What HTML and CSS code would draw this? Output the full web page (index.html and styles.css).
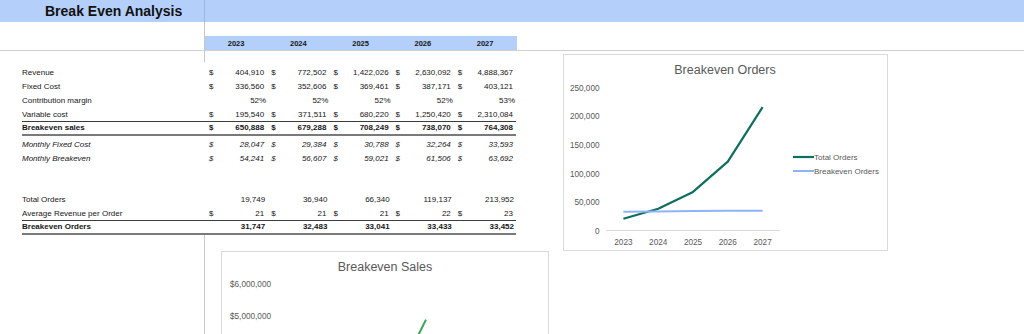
FILE: index.html
```html
<!DOCTYPE html>
<html lang="en">
<head>
    <meta charset="UTF-8">
    <title>Break Even Analysis</title>
    <link rel="stylesheet" href="styles.css">
</head>
<body>
<div class="sheet">
    <div class="banner">
        <h1>Break Even Analysis</h1>
    </div>
    <div class="year-head">
        <div class="years">
            <span>2023</span><span>2024</span><span>2025</span><span>2026</span><span>2027</span>
        </div>
    </div>
    <div class="main">
        <div class="left">
            <div class="table">
                <div class="row">
                    <span class="label">Revenue</span>
                    <span class="acc"><span>$</span><span>404,910</span></span>
                    <span class="acc"><span>$</span><span>772,502</span></span>
                    <span class="acc"><span>$</span><span>1,422,026</span></span>
                    <span class="acc"><span>$</span><span>2,630,092</span></span>
                    <span class="acc"><span>$</span><span>4,888,367</span></span>
                </div>
                <div class="row">
                    <span class="label">Fixed Cost</span>
                    <span class="acc"><span>$</span><span>336,560</span></span>
                    <span class="acc"><span>$</span><span>352,606</span></span>
                    <span class="acc"><span>$</span><span>369,461</span></span>
                    <span class="acc"><span>$</span><span>387,171</span></span>
                    <span class="acc"><span>$</span><span>403,121</span></span>
                </div>
                <div class="row">
                    <span class="label">Contribution margin</span>
                    <span class="num pct">52%</span>
                    <span class="num pct">52%</span>
                    <span class="num pct">52%</span>
                    <span class="num pct">52%</span>
                    <span class="num pct">53%</span>
                </div>
                <div class="row rule">
                    <span class="label">Variable cost</span>
                    <span class="acc"><span>$</span><span>195,540</span></span>
                    <span class="acc"><span>$</span><span>371,511</span></span>
                    <span class="acc"><span>$</span><span>680,220</span></span>
                    <span class="acc"><span>$</span><span>1,250,420</span></span>
                    <span class="acc"><span>$</span><span>2,310,084</span></span>
                </div>
                <div class="row total gap">
                    <span class="label">Breakeven sales</span>
                    <span class="acc"><span>$</span><span>650,888</span></span>
                    <span class="acc"><span>$</span><span>679,288</span></span>
                    <span class="acc"><span>$</span><span>708,249</span></span>
                    <span class="acc"><span>$</span><span>738,070</span></span>
                    <span class="acc"><span>$</span><span>764,308</span></span>
                </div>
                <div class="row italic">
                    <span class="label">Monthly Fixed Cost</span>
                    <span class="acc"><span>$</span><span>28,047</span></span>
                    <span class="acc"><span>$</span><span>29,384</span></span>
                    <span class="acc"><span>$</span><span>30,788</span></span>
                    <span class="acc"><span>$</span><span>32,264</span></span>
                    <span class="acc"><span>$</span><span>33,593</span></span>
                </div>
                <div class="row italic">
                    <span class="label">Monthly Breakeven</span>
                    <span class="acc"><span>$</span><span>54,241</span></span>
                    <span class="acc"><span>$</span><span>56,607</span></span>
                    <span class="acc"><span>$</span><span>59,021</span></span>
                    <span class="acc"><span>$</span><span>61,506</span></span>
                    <span class="acc"><span>$</span><span>63,692</span></span>
                </div>
                <div class="spacer"></div>
                <div class="row">
                    <span class="label">Total Orders</span>
                    <span class="num">19,749</span>
                    <span class="num">36,940</span>
                    <span class="num">66,340</span>
                    <span class="num">119,137</span>
                    <span class="num">213,952</span>
                </div>
                <div class="row rule">
                    <span class="label">Average Revenue per Order</span>
                    <span class="acc"><span>$</span><span>21</span></span>
                    <span class="acc"><span>$</span><span>21</span></span>
                    <span class="acc"><span>$</span><span>21</span></span>
                    <span class="acc"><span>$</span><span>22</span></span>
                    <span class="acc"><span>$</span><span>23</span></span>
                </div>
                <div class="row total">
                    <span class="label">Breakeven Orders</span>
                    <span class="num">31,747</span>
                    <span class="num">32,483</span>
                    <span class="num">33,041</span>
                    <span class="num">33,433</span>
                    <span class="num">33,452</span>
                </div>
            </div>

            <div class="chart sales-chart">
                <svg width="326" height="82" viewBox="0 0 326 82">
                    <text class="chart-title" x="163" y="19" text-anchor="middle">Breakeven Sales</text>
                    <text class="axis" x="49" y="35" text-anchor="end">$6,000,000</text>
                    <text class="axis" x="49" y="67" text-anchor="end">$5,000,000</text>
                    <polyline points="168,139.8 204,67.6" fill="none" stroke="#3aa655" stroke-width="2"/>
                </svg>
            </div>
        </div>

        <div class="chart orders-chart">
            <svg width="323" height="195" viewBox="0 0 323 195">
                <text class="chart-title" x="161" y="19" text-anchor="middle">Breakeven Orders</text>
                <text class="axis" x="35.5" y="35.5" text-anchor="end">250,000</text>
                <text class="axis" x="35.5" y="64.2" text-anchor="end">200,000</text>
                <text class="axis" x="35.5" y="92.9" text-anchor="end">150,000</text>
                <text class="axis" x="35.5" y="121.6" text-anchor="end">100,000</text>
                <text class="axis" x="35.5" y="150.3" text-anchor="end">50,000</text>
                <text class="axis" x="35.5" y="179" text-anchor="end">0</text>
                <line x1="42" y1="175.5" x2="216" y2="175.5" stroke="#d9d9d9" stroke-width="1"/>
                <text class="axis" x="59.4" y="190" text-anchor="middle">2023</text>
                <text class="axis" x="94.2" y="190" text-anchor="middle">2024</text>
                <text class="axis" x="129" y="190" text-anchor="middle">2025</text>
                <text class="axis" x="163.8" y="190" text-anchor="middle">2026</text>
                <text class="axis" x="198.6" y="190" text-anchor="middle">2027</text>
                <polyline points="59.4,163.7 94.2,153.8 129,136.9 163.8,106.6 198.6,52.2" fill="none" stroke="#0f6e5f" stroke-width="2.2" stroke-linejoin="round"/>
                <polyline points="59.4,156.8 94.2,156.4 129,156 163.8,155.8 198.6,155.8" fill="none" stroke="#8fb4f6" stroke-width="2"/>
                <line x1="229" y1="102" x2="250" y2="102" stroke="#0f6e5f" stroke-width="2.2"/>
                <text class="legend" x="250" y="105">Total Orders</text>
                <line x1="229" y1="116" x2="250" y2="116" stroke="#8fb4f6" stroke-width="2"/>
                <text class="legend" x="250" y="119">Breakeven Orders</text>
            </svg>
        </div>
    </div>
</div>
</body>
</html>
```

FILE: styles.css
```css
html, body {
    margin: 0;
    height: 334px;
    overflow: hidden;
}
body {
    font-family: "Liberation Sans", Arial, sans-serif;
    color: #161616;
    background-color: #ffffff;
}
.sheet {
    height: 334px;
    background: linear-gradient(#c8c8c8, #c8c8c8) 204px 0 / 1px 100% no-repeat;
}
.banner {
    height: 22px;
    background: linear-gradient(#9db6de, #9db6de) 204px 0 / 1px 100% no-repeat, #b4cffa;
}
.banner h1 {
    margin: 0;
    padding-left: 45px;
    font-size: 14px;
    line-height: 22px;
    font-weight: bold;
    color: #111111;
}
.year-head {
    height: 28px;
    border-bottom: 1px solid #cfcfcf;
    display: flex;
    align-items: flex-end;
}
.years {
    margin-left: 205px;
    width: 312px;
    height: 14px;
    background-color: #b4cffa;
    display: grid;
    grid-template-columns: repeat(5, 62.25px);
    font-size: 7.5px;
    font-weight: bold;
    line-height: 15px;
    text-align: center;
}
.main {
    display: flex;
    align-items: flex-start;
}
.left {
    width: 563px;
    flex: none;
}
.table {
    margin: 11px 0 0 22px;
    padding-top: 4px;
    width: 494px;
    background-color: #ffffff;
    font-size: 8px;
}
.row {
    display: grid;
    grid-template-columns: 183px repeat(5, 1fr);
    height: 14px;
    line-height: 14px;
    box-sizing: border-box;
}
.row.rule {
    border-bottom: 1px solid #3c3c3c;
    line-height: 13px;
}
.row.total {
    font-weight: bold;
    border-bottom: 2px solid #7a7a7a;
    line-height: 12px;
}
.row.gap {
    margin-bottom: 2px;
}
.row.italic {
    font-style: italic;
}
.spacer {
    height: 27px;
}
.acc {
    display: flex;
    justify-content: space-between;
    padding: 0 3px 0 4px;
}
.num {
    text-align: right;
    padding-right: 2px;
}
.num.pct {
    padding-right: 1px;
}
.chart {
    border: 1px solid #dadada;
    background-color: #ffffff;
}
.chart svg {
    display: block;
}
.chart-title {
    font-size: 12.5px;
    fill: #595959;
}
.axis {
    font-size: 8.2px;
    fill: #595959;
}
.legend {
    font-size: 8px;
    fill: #595959;
}
.orders-chart {
    margin-top: 3px;
    width: 323px;
    height: 195px;
}
.sales-chart {
    margin: 16px 0 0 221px;
    width: 326px;
    height: 82px;
    border-bottom: none;
    overflow: hidden;
}
```
